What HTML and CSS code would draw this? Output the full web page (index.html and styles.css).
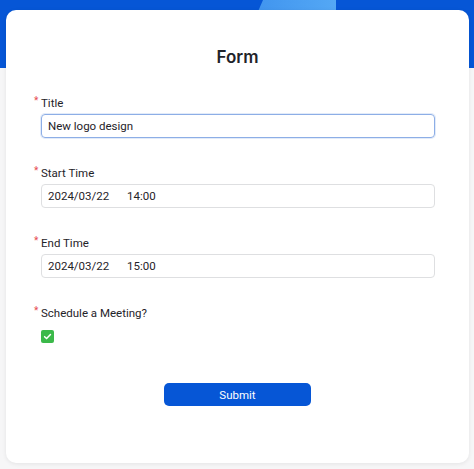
FILE: index.html
```html
<!DOCTYPE html>
<html>

<head>
    <title>Form</title>
    <link rel="stylesheet" href="styles.css">
</head>

<body>
    <div class="band">
        <div class="band-shape"></div>
    </div>

    <div class="card">
        <h1 class="heading">Form</h1>

        <div class="field">
            <div class="label"><span class="req">*</span>Title</div>
            <div class="input focused">New logo design</div>
        </div>

        <div class="field">
            <div class="label"><span class="req">*</span>Start Time</div>
            <div class="input"><span class="date">2024/03/22</span><span class="time">14:00</span></div>
        </div>

        <div class="field">
            <div class="label"><span class="req">*</span>End Time</div>
            <div class="input"><span class="date">2024/03/22</span><span class="time">15:00</span></div>
        </div>

        <div class="field">
            <div class="label"><span class="req">*</span>Schedule a Meeting?</div>
            <div class="check-row">
                <span class="checkbox">
                    <svg width="9" height="9" viewBox="0 0 10 10">
                        <path d="M1.8 5.2 L4 7.3 L8.3 2.8" fill="none" stroke="#fff" stroke-width="1.7"
                            stroke-linecap="round" stroke-linejoin="round" />
                    </svg>
                </span>
            </div>
        </div>

        <div class="actions">
            <button class="submit">Submit</button>
        </div>
    </div>
</body>

</html>
```

FILE: styles.css
```css
body {
    font-family: Roboto, 'Liberation Sans', Arial, sans-serif;
    background-color: #f6f6f7;
    margin: 0;
    padding: 10px 5px 6px 6px;
    position: relative;
    color: #1f2329;
}

.band {
    position: absolute;
    top: 0;
    left: 0;
    right: 0;
    height: 68px;
    background-color: #0656d6;
    overflow: hidden;
}

.band-shape {
    position: absolute;
    top: 0;
    left: 250px;
    width: 86px;
    height: 30px;
    background: linear-gradient(90deg, #3f93ee, #54a8f5);
    clip-path: polygon(13px 0, 86px 0, 86px 30px, 0 30px);
}

.card {
    position: relative;
    background: #ffffff;
    border-radius: 10px;
    box-shadow: 0 1px 4px rgba(0, 0, 0, 0.08);
    padding: 35px 34px 56px 28px;
    height: 362px;
}

.heading {
    margin: 0 0 26px;
    padding-left: 6px;
    text-align: center;
    font-family: Inter, 'Noto Sans', Arial, sans-serif;
    font-size: 17px;
    line-height: 24px;
    font-weight: 600;
    color: #1f2329;
}

.field {
    margin-bottom: 27px;
}

.label {
    display: flex;
    align-items: center;
    font-size: 11.5px;
    line-height: 16px;
    margin-bottom: 3px;
    color: #1f2329;
}

.req {
    color: #e5484d;
    width: 7px;
    font-size: 10px;
    margin-top: -5px;
}

.input {
    display: flex;
    align-items: center;
    margin-left: 7px;
    height: 24px;
    box-sizing: border-box;
    border: 1px solid #dedfe1;
    border-radius: 4px;
    padding: 0 6px;
    font-size: 11.5px;
    color: #1f2329;
}

.input.focused {
    border-color: #8daee6;
    box-shadow: 0 0 0 1px rgba(141, 174, 230, 0.25);
}

.date {
    flex: 0 0 79px;
}

.check-row {
    display: flex;
    align-items: center;
    height: 24px;
    margin-left: 7px;
    margin-top: 3px;
}

.checkbox {
    display: flex;
    align-items: center;
    justify-content: center;
    width: 13px;
    height: 13px;
    border-radius: 2px;
    background-color: #3bb94a;
}

.actions {
    display: flex;
    justify-content: center;
    margin-top: -27px;
    padding-top: 35px;
    padding-left: 6px;
}

.submit {
    width: 147px;
    height: 23px;
    border: none;
    border-radius: 5px;
    background-color: #0656d6;
    color: #ffffff;
    font-family: Roboto, 'Liberation Sans', Arial, sans-serif;
    font-size: 11.5px;
    cursor: pointer;
}
```
